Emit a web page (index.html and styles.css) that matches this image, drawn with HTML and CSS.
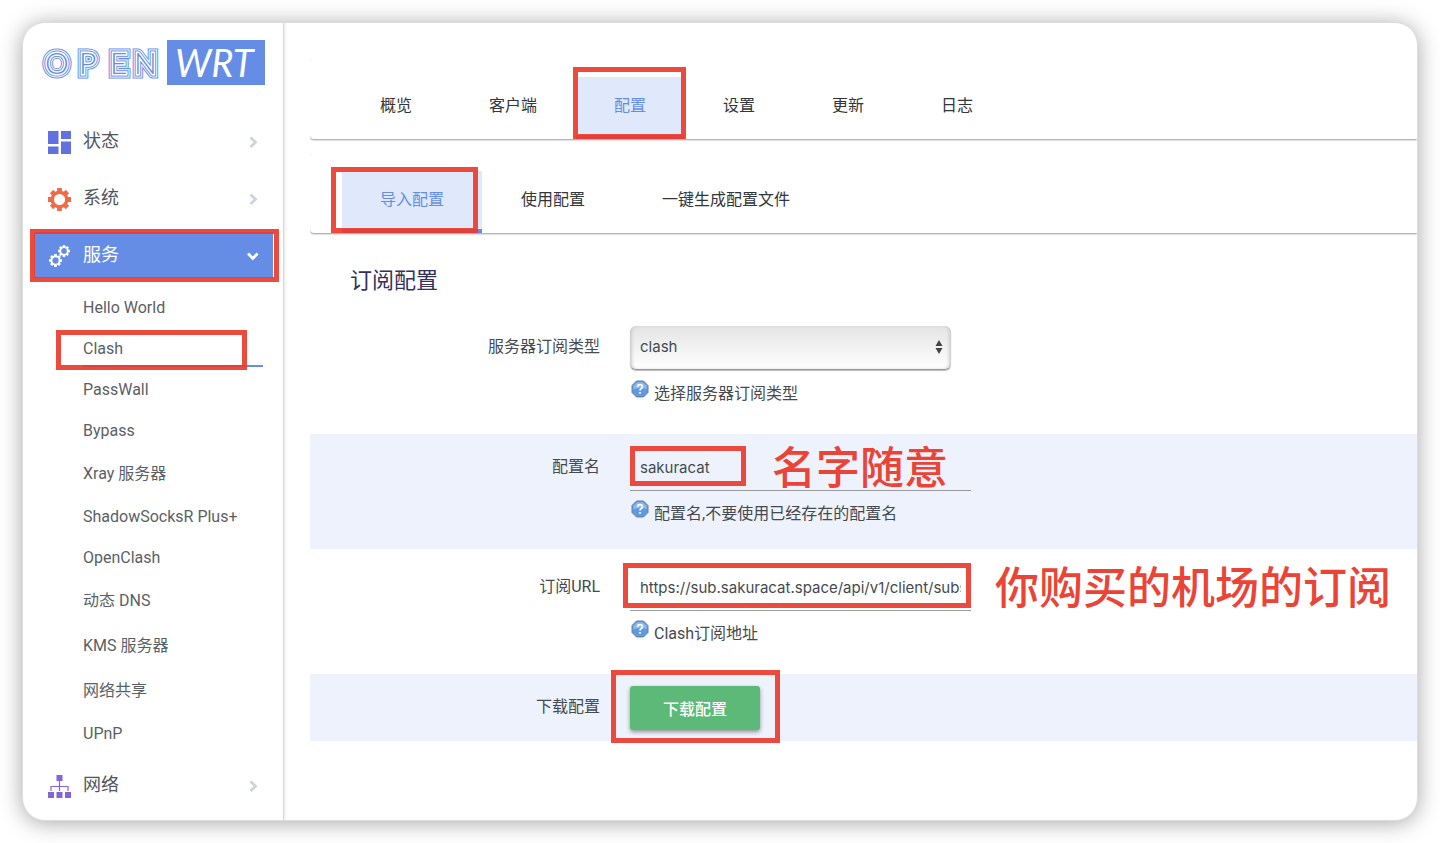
FILE: index.html
```
<!DOCTYPE html>
<html lang="zh-CN">
<head>
    <title>OpenWrt - Clash</title>
    <meta charset="UTF-8">
    <meta name="viewport" content="width=device-width, initial-scale=1.0">
    <link rel="stylesheet" href="styles.css">
</head>
<body>
    <svg class="defs" width="0" height="0" aria-hidden="true">
        <symbol id="chevron" viewBox="0 0 12 12">
            <path d="M3.500 1.500L8.500 6.200L3.500 11" fill="none" stroke="currentColor" stroke-width="2.800"/>
        </symbol>
        <symbol id="gear" viewBox="0 0 24 24">
            <circle cx="12" cy="12" r="7.6" fill="none" stroke="currentColor" stroke-width="3.6"/>
            <g stroke="currentColor" stroke-width="5">
                <path d="M12 0V4M12 20V24M0 12H4M20 12H24M3.7 3.7L6.4 6.4M17.6 17.6L20.3 20.3M3.7 20.3L6.4 17.6M17.6 6.4L20.3 3.7"/>
            </g>
        </symbol>
        <symbol id="help" viewBox="0 0 18 18">
            <path d="M5.5 1h7L17 5.500v7L12.500 17h-7L1 12.500v-7z" fill="#5f9ade" stroke="#6d8099"/>
            <path d="M6 2.300h6L15.700 6v3Q9 7 2.300 9.500V6z" fill="#8bb9ea"/>
            <path d="M6.600 6.900Q6.700 4.700 9 4.700T11.400 6.700Q11.400 8 10 8.800Q9 9.300 9 10.500M9 12v1.800" fill="none" stroke="#fff" stroke-width="1.700"/>
        </symbol>
    </svg>

    <div class="window">
        <aside class="sidebar">
            <a class="logo" href="#" aria-label="OpenWrt">
                <svg width="224" height="45" viewBox="0 0 224 45">
                    <g class="logo-open">
                        <text class="line-1" x="4 38 69 93" y="34">OPEN</text>
                        <text class="line-2" x="4 38 69 93" y="34">OPEN</text>
                        <text class="line-3" x="4 38 69 93" y="34">OPEN</text>
                        <text class="line-4" x="4 38 69 93" y="34">OPEN</text>
                        <text class="line-5" x="4 38 69 93" y="34">OPEN</text>
                    </g>
                    <rect x="126" width="98" height="45" fill="#658de6"/>
                    <text class="logo-wrt" x="134" y="37">WRT</text>
                </svg>
            </a>

            <nav class="menu">
                <a class="menu-item" href="#">
                    <svg class="menu-icon" viewBox="0 0 23 23" fill="#6172e0"><path d="M0 0h10.500v13H0zM13 0h10v8H13zM0 15.500h10.500V23H0zM13 10.500h10V23H13z"/></svg>
                    <span>状态</span>
                    <svg class="arrow"><use href="#chevron"/></svg>
                </a>
                <a class="menu-item" href="#">
                    <svg class="menu-icon orange"><use href="#gear"/></svg>
                    <span>系统</span>
                    <svg class="arrow"><use href="#chevron"/></svg>
                </a>
                <a class="menu-item active" href="#">
                    <svg class="menu-icon" viewBox="0 0 23 23">
                        <use href="#gear" x="1" y="9" width="13" height="13"/>
                        <use href="#gear" x="10" y="0" width="12" height="12"/>
                    </svg>
                    <span>服务</span>
                    <svg class="arrow open"><use href="#chevron"/></svg>
                    <i class="mark mark-service"></i>
                </a>
                <ul class="submenu">
                    <li><a href="#">Hello World</a></li>
                    <li><a class="current" href="#">Clash<i class="mark mark-clash"></i></a></li>
                    <li><a href="#">PassWall</a></li>
                    <li><a href="#">Bypass</a></li>
                    <li><a class="zh" href="#">Xray 服务器</a></li>
                    <li><a href="#">ShadowSocksR Plus+</a></li>
                    <li><a href="#">OpenClash</a></li>
                    <li><a class="zh" href="#">动态 DNS</a></li>
                    <li><a class="zh" href="#">KMS 服务器</a></li>
                    <li><a class="zh" href="#">网络共享</a></li>
                    <li><a href="#">UPnP</a></li>
                </ul>
                <a class="menu-item" href="#">
                    <svg class="menu-icon" viewBox="0 0 23 23" fill="#8465d8">
                        <path d="M8.500 0h6v6h-6zM0 17h6v6H0zM8.500 17h6v6h-6zM17 17h6v6h-6z"/>
                        <path d="M11.500 6v10M3 16v-4.500h17V16" fill="none" stroke="#8465d8" stroke-width="1.200"/>
                    </svg>
                    <span>网络</span>
                    <svg class="arrow"><use href="#chevron"/></svg>
                </a>
            </nav>
        </aside>

        <main class="content">
            <nav class="tabs">
                <a href="#">概览</a>
                <a href="#">客户端</a>
                <a class="active" href="#">配置<i class="mark mark-config"></i></a>
                <a href="#">设置</a>
                <a href="#">更新</a>
                <a href="#">日志</a>
            </nav>
            <nav class="tabs">
                <a class="active" href="#">导入配置<i class="mark mark-import"></i></a>
                <a href="#">使用配置</a>
                <a href="#">一键生成配置文件</a>
            </nav>

            <form>
                <h2>订阅配置</h2>
                <div class="rows">
                    <div class="row">
                        <label for="type">服务器订阅类型</label>
                        <div class="field">
                            <div class="control select">
                                <select id="type"><option>clash</option></select>
                                <svg width="8" height="14" viewBox="0 0 8 14"><path d="M4 0L7.500 6h-7zM4 14L.5 8h7z" fill="#444"/></svg>
                            </div>
                            <p class="hint"><svg><use href="#help"/></svg>选择服务器订阅类型</p>
                        </div>
                    </div>
                    <div class="row">
                        <label for="name">配置名</label>
                        <div class="field">
                            <div class="control">
                                <input type="text" id="name" value="sakuracat">
                                <i class="mark mark-name"></i>
                                <span class="note note-name">名字随意</span>
                            </div>
                            <p class="hint"><svg><use href="#help"/></svg>配置名,不要使用已经存在的配置名</p>
                        </div>
                    </div>
                    <div class="row">
                        <label for="url">订阅URL</label>
                        <div class="field">
                            <div class="control">
                                <input type="text" id="url" value="https://sub.sakuracat.space/api/v1/client/subscribe">
                                <i class="mark mark-url"></i>
                                <span class="note note-url">你购买的机场的订阅</span>
                            </div>
                            <p class="hint"><svg><use href="#help"/></svg>Clash订阅地址</p>
                        </div>
                    </div>
                    <div class="row">
                        <label for="download">下载配置</label>
                        <div class="field">
                            <button type="button" id="download">下载配置<i class="mark mark-download"></i></button>
                        </div>
                    </div>
                </div>
            </form>
        </main>
    </div>
</body>
</html>
```
FILE: styles.css
```
* {
    box-sizing: border-box;
}
body {
    margin: 0;
    padding: 22px;
    background-color: #fff;
    color: #444a50;
    font-family: Roboto, "Noto Sans CJK SC", sans-serif;
    font-size: 16px;
}
a {
    color: inherit;
    text-decoration: none;
}
.defs {
    position: absolute;
}
.window {
    display: flex;
    min-height: calc(100vh - 44px);
    border: 1px solid #dcdcdc;
    border-radius: 23px;
    overflow: hidden;
    background-color: #fff;
    box-shadow: 0 2px 22px rgba(0, 0, 0, 0.35);
}

/* sidebar */
.sidebar {
    flex: none;
    width: 261px;
    border-right: 1px solid #d8d8d8;
    box-shadow: 1px 0 3px rgba(0, 0, 0, 0.1);
}
.logo {
    display: block;
    height: 45px;
    margin: 17px 0 33px 18px;
}
.logo svg {
    display: block;
    overflow: visible;
}
.logo-open text {
    font-family: Lato, sans-serif;
    font-size: 30px;
    font-weight: 300;
    fill: #658de6;
    stroke: #658de6;
    stroke-miterlimit: 2;
}
.logo-open .line-1 {
    stroke-width: 9;
}
.logo-open .line-2 {
    fill: #fff;
    stroke: #fff;
    stroke-width: 7;
}
.logo-open .line-3 {
    stroke-width: 5;
}
.logo-open .line-4 {
    fill: #fff;
    stroke: #fff;
    stroke-width: 3;
}
.logo-open .line-5 {
    stroke: none;
}
.logo-wrt {
    font-family: Lato, sans-serif;
    font-size: 38px;
    font-style: italic;
    fill: #fff;
}
.menu {
    padding: 0 10px 0 11px;
}
.menu-item {
    position: relative;
    display: flex;
    align-items: center;
    height: 46px;
    margin-bottom: 11px;
    padding: 0 14px;
    color: #50555c;
    font-size: 18px;
}
.menu-item span {
    flex: 1;
    margin-bottom: 4px;
}
.menu-item.active {
    margin-bottom: 9px;
    background-color: #658de6;
    color: #fff;
}
.menu-icon {
    width: 23px;
    height: 23px;
    margin: 2px 12px 0 0;
}
.orange {
    color: #ee6c47;
}
.arrow {
    width: 12px;
    height: 12px;
    margin-top: 2px;
    color: #ced4da;
}
.arrow.open {
    color: #fff;
    transform: rotate(90deg);
}
.submenu {
    margin: 0 0 10px;
    padding: 0 10px 0 49px;
    list-style: none;
}
.submenu a {
    position: relative;
    display: block;
    margin-bottom: 2px;
    padding: 11px 0 7px;
    border-bottom: 2px solid transparent;
    color: #5a5f66;
    line-height: 19px;
}
.submenu a.zh {
    line-height: 23px;
}
.submenu a.current {
    border-color: #658de6;
}

/* content */
.content {
    flex: 1;
    min-width: 0;
    padding: 36px 0 0 26px;
}
.tabs {
    display: flex;
    gap: 1px;
    margin-bottom: 14px;
    padding: 18px 0 0 32px;
    border-radius: 4px 0 0 4px;
    box-shadow: 0 1px 2px rgba(0, 0, 0, 0.4);
    clip-path: inset(0 0 -6px 0);
}
.tabs a {
    position: relative;
    height: 62px;
    padding: 0 38px;
    border-bottom: 4px solid transparent;
    color: #32363a;
    line-height: 58px;
}
.tabs a.active {
    border-color: #658de6;
    background-color: #e0e8fb;
    color: #658de6;
}
h2 {
    margin: 32px 0 17px 40px;
    color: #32325d;
    font-size: 22px;
    font-weight: 400;
    line-height: 32px;
}
.rows {
    display: grid;
    gap: 5px;
}
.row {
    display: flex;
    padding: 12px 0 11px;
}
.row:nth-child(even) {
    background-color: #edf2fd;
}
.row label {
    width: 290px;
    margin: 9px 30px 0 0;
    line-height: 24px;
    text-align: right;
}
.control {
    position: relative;
    width: 341px;
    height: 45px;
}
.control input {
    width: 100%;
    height: 45px;
    padding: 0 10px 2px;
    border: 0;
    border-bottom: 1px solid #9a9a9a;
    background: none;
    color: inherit;
    font-family: Inter, sans-serif;
    font-size: 15px;
}
.select {
    width: 321px;
}
.select select {
    width: 100%;
    height: 44px;
    padding: 0 10px 2px;
    appearance: none;
    border: 0;
    border-bottom: 1px solid #999;
    border-radius: 6px;
    background: linear-gradient(#e4e4e4, #fff);
    box-shadow: inset 3px 0 3px -1px #ccc, inset -3px 0 3px -1px #ccc, 0 1px 1px #bbb;
    color: inherit;
    font-family: Inter, sans-serif;
    font-size: 15px;
}
.select svg {
    position: absolute;
    top: 14px;
    right: 8px;
}
.hint {
    display: flex;
    margin: 11px 0 12px;
    line-height: 24px;
}
.hint svg {
    width: 18px;
    height: 18px;
    margin: -2px 5px 0 1px;
}
button {
    position: relative;
    display: block;
    width: 130px;
    height: 44px;
    border: 0;
    border-radius: 3px;
    background-color: #5cb978;
    box-shadow: 0 2px 4px rgba(0, 0, 0, 0.4);
    color: #fff;
    font: inherit;
    font-weight: 500;
}

/* red marks and notes */
.mark {
    position: absolute;
    border: 5px solid #eb3b2e;
    opacity: 0.92;
    pointer-events: none;
}
.mark-service {
    inset: -3px -6px -4px -4px;
}
.mark-clash {
    inset: 2px 16px -5px -27px;
}
.mark-config {
    inset: -10px -2px -4px -3px;
}
.mark-import {
    inset: -4px 4px -4px -11px;
}
.mark-name {
    inset: 0 225px 5px 0;
}
.mark-url {
    inset: -3px 0 3px -7px;
}
.mark-download {
    inset: -16px -20px -13px -19px;
}
.note {
    position: absolute;
    top: -7px;
    color: #eb4335;
    font-size: 44px;
    font-weight: 500;
    line-height: 60px;
    white-space: nowrap;
}
.note-name {
    left: 142px;
}
.note-url {
    left: 365px;
}
```
